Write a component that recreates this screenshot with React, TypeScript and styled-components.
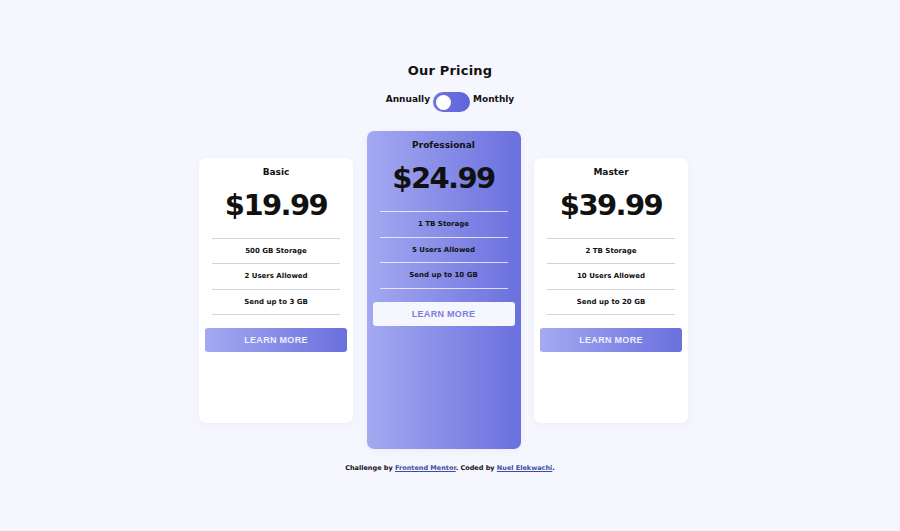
import React, { useState } from 'react';
import styled, { createGlobalStyle } from 'styled-components';

const GlobalStyle = createGlobalStyle`
  html, body {
    margin: 0;
    padding: 0;
    background: #f6f6fe;
  }
  body {
    font-family: 'DejaVu Sans', 'Open Sans', sans-serif;
    color: #111;
  }
`;

const Page = styled.main`
  width: 900px;
  height: 531px;
  display: flex;
  flex-direction: column;
  align-items: center;
  box-sizing: border-box;
  padding-top: 62px;
`;

const Title = styled.h1`
  margin: 0;
  font-size: 13px;
  line-height: 18px;
  font-weight: 700;
  letter-spacing: 0.2px;
`;

const ToggleRow = styled.div`
  display: flex;
  align-items: center;
  gap: 3px;
  margin-top: 12px;
  font-size: 9px;
  font-weight: 700;

  span {
    margin-bottom: 6px;
  }
`;

const Switch = styled.button<{ on: boolean }>`
  width: 37px;
  height: 20px;
  border: none;
  border-radius: 10px;
  padding: 0;
  background: linear-gradient(90deg, #6f74e0, #5f65da);
  position: relative;
  cursor: pointer;

  &::after {
    content: '';
    position: absolute;
    top: 2.5px;
    left: ${p => (p.on ? '20px' : '2.5px')};
    width: 15px;
    height: 15px;
    border-radius: 50%;
    background: #fff;
  }
`;

const Cards = styled.section`
  display: flex;
  align-items: center;
  gap: 13.5px;
  margin-top: 19px;
  padding-right: 13px;
`;

const Card = styled.article<{ featured?: boolean }>`
  width: 154px;
  height: ${p => (p.featured ? '318px' : '265px')};
  box-sizing: border-box;
  border-radius: 7px;
  padding: 8px 13px 0;
  display: flex;
  flex-direction: column;
  align-items: stretch;
  background: ${p => (p.featured ? 'linear-gradient(90deg, #a4a9f1 0%, #6a70dd 100%)' : '#ffffff')};
  box-shadow: 0 2px 8px rgba(90, 95, 180, 0.06);
`;

const Plan = styled.h2`
  margin: 0;
  text-align: center;
  font-size: 9px;
  line-height: 12px;
  font-weight: 700;
`;

const Price = styled.div`
  margin-top: 7px;
  text-align: center;
  font-size: 29px;
  line-height: 40px;
  font-weight: 800;
  letter-spacing: -1.6px;
`;

const Features = styled.ul<{ featured?: boolean }>`
  list-style: none;
  margin: 13px 0 0;
  padding: 0;
  border-top: 1px solid ${p => (p.featured ? 'rgba(255,255,255,0.75)' : '#d3d3da')};
`;

const Feature = styled.li<{ featured?: boolean }>`
  height: 25.5px;
  display: flex;
  align-items: center;
  justify-content: center;
  font-size: 7px;
  font-weight: 700;
  border-bottom: 1px solid ${p => (p.featured ? 'rgba(255,255,255,0.75)' : '#d3d3da')};
  box-sizing: border-box;
`;

const LearnMore = styled.button<{ featured?: boolean }>`
  margin: 13px -7px 0;
  height: 24px;
  border: none;
  border-radius: 3px;
  font-family: 'Liberation Sans', Arial, sans-serif;
  font-size: 9px;
  font-weight: 700;
  letter-spacing: 0.3px;
  cursor: pointer;
  color: ${p => (p.featured ? '#7a7fdf' : '#eef0ff')};
  background: ${p => (p.featured ? '#f6f6fe' : 'linear-gradient(90deg, #a4a9f1 0%, #6a70dd 100%)')};
`;

const Footer = styled.footer`
  margin-top: 15px;
  font-size: 6.5px;
  font-weight: 700;

  a {
    color: #3d4fa3;
  }
`;

const plans = [
  {
    name: 'Basic',
    annual: '$199.99',
    monthly: '$19.99',
    features: ['500 GB Storage', '2 Users Allowed', 'Send up to 3 GB'],
  },
  {
    name: 'Professional',
    annual: '$249.99',
    monthly: '$24.99',
    features: ['1 TB Storage', '5 Users Allowed', 'Send up to 10 GB'],
    featured: true,
  },
  {
    name: 'Master',
    annual: '$399.99',
    monthly: '$39.99',
    features: ['2 TB Storage', '10 Users Allowed', 'Send up to 20 GB'],
  },
];

export default function App() {
  const [monthly, setMonthly] = useState(true);

  return (
    <>
      <GlobalStyle />
      <Page>
        <Title>Our Pricing</Title>
        <ToggleRow>
          <span>Annually</span>
          <Switch on={!monthly} onClick={() => setMonthly(m => !m)} aria-label="toggle billing" />
          <span>Monthly</span>
        </ToggleRow>

        <Cards>
          {plans.map(plan => (
            <Card key={plan.name} featured={plan.featured}>
              <Plan>{plan.name}</Plan>
              <Price>{monthly ? plan.monthly : plan.annual}</Price>
              <Features featured={plan.featured}>
                {plan.features.map(f => (
                  <Feature key={f} featured={plan.featured}>{f}</Feature>
                ))}
              </Features>
              <LearnMore featured={plan.featured}>LEARN MORE</LearnMore>
            </Card>
          ))}
        </Cards>

        <Footer>
          Challenge by <a href="#">Frontend Mentor</a>. Coded by <a href="#">Nuel Elekwachi</a>.
        </Footer>
      </Page>
    </>
  );
}
